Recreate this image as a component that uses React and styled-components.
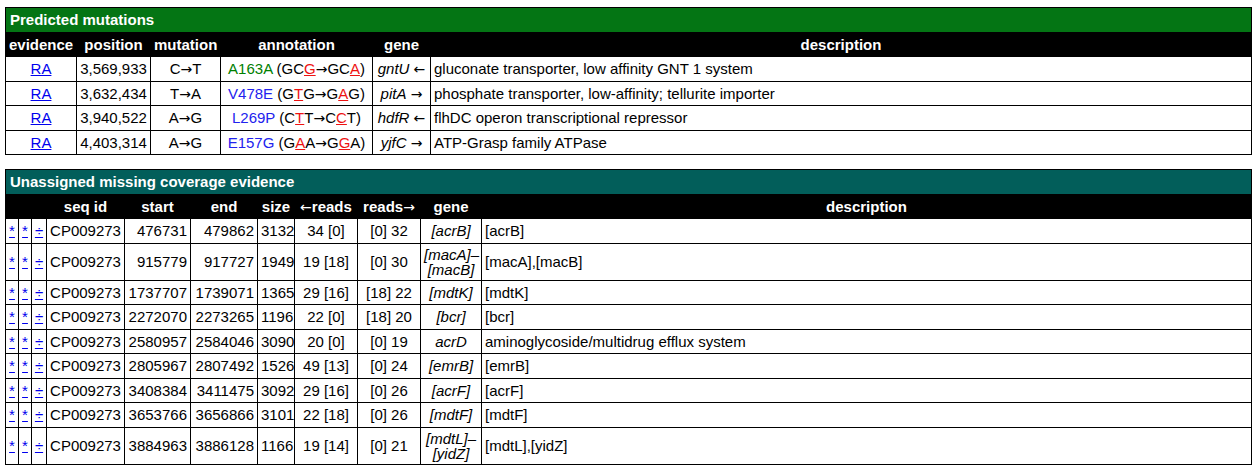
import React from 'react';
import styled, { createGlobalStyle } from 'styled-components';

const GlobalStyle = createGlobalStyle`
  body {
    margin: 0;
    padding: 7px 0 0 5px;
    background: #fff;
    font-family: "Liberation Sans", Arial, Helvetica, sans-serif;
    font-size: 15px;
    color: #000;
  }
`;

const Page = styled.div`
  display: flex;
  flex-direction: column;
  gap: 14px;
`;

const Table = styled.table`
  width: 1247px;
  table-layout: fixed;
  border-collapse: collapse;
  border: 1px solid #000;
  line-height: 17.5px;
`;

const TitleCell = styled.th`
  background-color: ${({ $bg }) => $bg};
  color: #fff;
  font-weight: bold;
  text-align: left;
  padding: 3px 4px;
  border: 1px solid #000;
`;

const HeadCell = styled.th`
  background-color: #000;
  color: #fff;
  font-weight: bold;
  text-align: center;
  padding: 3px;
  white-space: nowrap;
  border: 1px solid #000;
`;

const Cell = styled.td`
  border: 1px solid #000;
  padding: ${({ $tight }) => ($tight ? '3px 1px' : '3px')};
  text-align: ${({ $align }) => $align || 'center'};
  white-space: nowrap;
  overflow: hidden;
  background: #fff;
`;

const GeneCell = styled(Cell)`
  font-style: italic;
  line-height: 15px;
`;

const Link = styled.a`
  color: #0000ee;
  text-decoration: underline;
  cursor: pointer;
`;

const Aa = styled.span`
  color: ${({ $syn }) => ($syn ? '#008000' : '#2222ee')};
`;

const Changed = styled.span`
  color: #ee1111;
  text-decoration: underline;
`;

const Arrow = styled.span`
  font-family: "DejaVu Sans", sans-serif;
  font-style: normal;
  font-weight: normal;
  font-size: 14px;
  line-height: 10px;
`;

// wrap ← and → so they get a wider arrow glyph
const arrows = (str) =>
  str.split(/([←→])/).map((part, i) =>
    part === '←' || part === '→' ? <Arrow key={i}>{part}</Arrow> : part
  );

const mutations = [
  { pos: '3,569,933', mut: 'C→T', aa: 'A163A', syn: true, codon: ['GC', 'G', '→GC', 'A', ''], gene: 'gntU', dir: '←', desc: 'gluconate transporter, low affinity GNT 1 system' },
  { pos: '3,632,434', mut: 'T→A', aa: 'V478E', codon: ['G', 'T', 'G→G', 'A', 'G'], gene: 'pitA', dir: '→', desc: 'phosphate transporter, low-affinity; tellurite importer' },
  { pos: '3,940,522', mut: 'A→G', aa: 'L269P', codon: ['C', 'T', 'T→C', 'C', 'T'], gene: 'hdfR', dir: '←', desc: 'flhDC operon transcriptional repressor' },
  { pos: '4,403,314', mut: 'A→G', aa: 'E157G', codon: ['G', 'A', 'A→G', 'G', 'A'], gene: 'yjfC', dir: '→', desc: 'ATP-Grasp family ATPase' },
];

const coverage = [
  { start: '476731', end: '479862', size: '3132', left: '34 [0]', right: '[0] 32', gene: ['[acrB]'], desc: '[acrB]' },
  { start: '915779', end: '917727', size: '1949', left: '19 [18]', right: '[0] 30', gene: ['[macA]–', '[macB]'], desc: '[macA],[macB]' },
  { start: '1737707', end: '1739071', size: '1365', left: '29 [16]', right: '[18] 22', gene: ['[mdtK]'], desc: '[mdtK]' },
  { start: '2272070', end: '2273265', size: '1196', left: '22 [0]', right: '[18] 20', gene: ['[bcr]'], desc: '[bcr]' },
  { start: '2580957', end: '2584046', size: '3090', left: '20 [0]', right: '[0] 19', gene: ['acrD'], desc: 'aminoglycoside/multidrug efflux system' },
  { start: '2805967', end: '2807492', size: '1526', left: '49 [13]', right: '[0] 24', gene: ['[emrB]'], desc: '[emrB]' },
  { start: '3408384', end: '3411475', size: '3092', left: '29 [16]', right: '[0] 26', gene: ['[acrF]'], desc: '[acrF]' },
  { start: '3653766', end: '3656866', size: '3101', left: '22 [18]', right: '[0] 26', gene: ['[mdtF]'], desc: '[mdtF]' },
  { start: '3884963', end: '3886128', size: '1166', left: '19 [14]', right: '[0] 21', gene: ['[mdtL]–', '[yidZ]'], desc: '[mdtL],[yidZ]' },
];

const MutationTable = () => (
  <Table>
    <colgroup>
      <col style={{ width: 71 }} />
      <col style={{ width: 74 }} />
      <col style={{ width: 70 }} />
      <col style={{ width: 152 }} />
      <col style={{ width: 58 }} />
      <col />
    </colgroup>
    <tbody>
      <tr>
        <TitleCell colSpan={6} $bg="#047514">Predicted mutations</TitleCell>
      </tr>
      <tr>
        <HeadCell>evidence</HeadCell>
        <HeadCell>position</HeadCell>
        <HeadCell>mutation</HeadCell>
        <HeadCell>annotation</HeadCell>
        <HeadCell>gene</HeadCell>
        <HeadCell>description</HeadCell>
      </tr>
      {mutations.map((m) => (
        <tr key={m.pos}>
          <Cell><Link>RA</Link></Cell>
          <Cell>{m.pos}</Cell>
          <Cell>{arrows(m.mut)}</Cell>
          <Cell>
            <Aa $syn={m.syn}>{m.aa}</Aa> ({m.codon[0]}<Changed>{m.codon[1]}</Changed>{arrows(m.codon[2])}<Changed>{m.codon[3]}</Changed>{m.codon[4]})
          </Cell>
          <Cell><i>{m.gene}</i> <Arrow>{m.dir}</Arrow></Cell>
          <Cell $align="left">{m.desc}</Cell>
        </tr>
      ))}
    </tbody>
  </Table>
);

const CoverageTable = () => (
  <Table>
    <colgroup>
      <col style={{ width: 13 }} />
      <col style={{ width: 13 }} />
      <col style={{ width: 15 }} />
      <col style={{ width: 78 }} />
      <col style={{ width: 66 }} />
      <col style={{ width: 67 }} />
      <col style={{ width: 37 }} />
      <col style={{ width: 63 }} />
      <col style={{ width: 63 }} />
      <col style={{ width: 61 }} />
      <col />
    </colgroup>
    <tbody>
      <tr>
        <TitleCell colSpan={11} $bg="#025e5a">Unassigned missing coverage evidence</TitleCell>
      </tr>
      <tr>
        <HeadCell />
        <HeadCell />
        <HeadCell />
        <HeadCell>seq id</HeadCell>
        <HeadCell>start</HeadCell>
        <HeadCell>end</HeadCell>
        <HeadCell>size</HeadCell>
        <HeadCell>{arrows('←reads')}</HeadCell>
        <HeadCell>{arrows('reads→')}</HeadCell>
        <HeadCell>gene</HeadCell>
        <HeadCell>description</HeadCell>
      </tr>
      {coverage.map((c) => (
        <tr key={c.start}>
          <Cell $tight><Link>*</Link></Cell>
          <Cell $tight><Link>*</Link></Cell>
          <Cell $tight><Link>÷</Link></Cell>
          <Cell>CP009273</Cell>
          <Cell $align="right">{c.start}</Cell>
          <Cell $align="right">{c.end}</Cell>
          <Cell>{c.size}</Cell>
          <Cell>{c.left}</Cell>
          <Cell>{c.right}</Cell>
          <GeneCell>
            {c.gene.map((g, i) => (
              <React.Fragment key={g}>
                {i > 0 && <br />}
                {g}
              </React.Fragment>
            ))}
          </GeneCell>
          <Cell $align="left">{c.desc}</Cell>
        </tr>
      ))}
    </tbody>
  </Table>
);

export default function App() {
  return (
    <>
      <GlobalStyle />
      <Page>
        <MutationTable />
        <CoverageTable />
      </Page>
    </>
  );
}
